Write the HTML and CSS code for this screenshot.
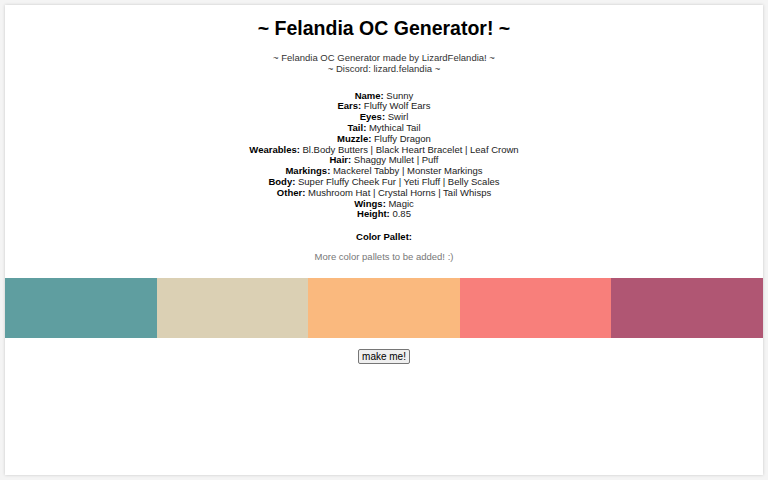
FILE: index.html
```html
<!DOCTYPE html>
<html>
<head>
<meta charset="utf-8">
<link rel="stylesheet" href="styles.css">
</head>
<body>
<div class="page">
  <h1 class="title">~ Felandia OC Generator! ~</h1>
  <div class="credits">
    <div>~ Felandia OC Generator made by LizardFelandia! ~</div>
    <div>~ Discord: lizard.felandia ~</div>
  </div>
  <div class="stats">
    <div><b>Name:</b> Sunny</div>
    <div><b>Ears:</b> Fluffy Wolf Ears</div>
    <div><b>Eyes:</b> Swirl</div>
    <div><b>Tail:</b> Mythical Tail</div>
    <div><b>Muzzle:</b> Fluffy Dragon</div>
    <div><b>Wearables:</b> Bl.Body Butters | Black Heart Bracelet | Leaf Crown</div>
    <div><b>Hair:</b> Shaggy Mullet | Puff</div>
    <div><b>Markings:</b> Mackerel Tabby | Monster Markings</div>
    <div><b>Body:</b> Super Fluffy Cheek Fur | Yeti Fluff | Belly Scales</div>
    <div><b>Other:</b> Mushroom Hat | Crystal Horns | Tail Whisps</div>
    <div><b>Wings:</b> Magic</div>
    <div><b>Height:</b> 0.85</div>
  </div>
  <div class="pallet-label">Color Pallet:</div>
  <div class="note">More color pallets to be added! :)</div>
  <div class="palette">
    <div class="swatch c1"></div>
    <div class="swatch c2"></div>
    <div class="swatch c3"></div>
    <div class="swatch c4"></div>
    <div class="swatch c5"></div>
  </div>
  <div class="actions"><button class="btn">make me!</button></div>
</div>
</body>
</html>
```
FILE: styles.css
```css
html, body {
  margin: 0;
  padding: 0;
  height: 100%;
}
body {
  background: #f4f4f4;
  font-family: "Liberation Sans", Arial, sans-serif;
  color: #111;
  padding: 5px;
  box-sizing: border-box;
}
.page {
  background: #fff;
  height: 100%;
  box-shadow: 0 0 3px rgba(0,0,0,0.18);
  text-align: center;
  padding-top: 12px;
  box-sizing: border-box;
}
.title {
  margin: 0;
  font-size: 19.5px;
  line-height: 23px;
  font-weight: bold;
  color: #000;
}
.credits {
  margin-top: 13px;
  font-size: 9.5px;
  line-height: 10.8px;
  color: #333;
}
.stats {
  margin-top: 16px;
  font-size: 9.5px;
  line-height: 10.8px;
  color: #222;
}
.stats b {
  color: #000;
}
.pallet-label {
  margin-top: 11px;
  font-size: 9.5px;
  line-height: 11px;
  font-weight: bold;
  color: #000;
}
.note {
  margin-top: 9px;
  font-size: 9.5px;
  line-height: 11px;
  color: #777;
}
.palette {
  display: flex;
  height: 60px;
  margin-top: 16px;
}
.swatch {
  flex: 1;
}
.c1 { background: #5f9ea0; }
.c2 { background: #dbd0b4; }
.c3 { background: #fab97e; }
.c4 { background: #f87f7b; }
.c5 { background: #b05673; }
.actions {
  margin-top: 8px;
}
.btn {
  font-family: "Liberation Sans", Arial, sans-serif;
  font-size: 10px;
  padding: 1px 3px;
  background: #efefef;
  border: 1px solid #767676;
  border-radius: 2px;
  color: #000;
}
```
